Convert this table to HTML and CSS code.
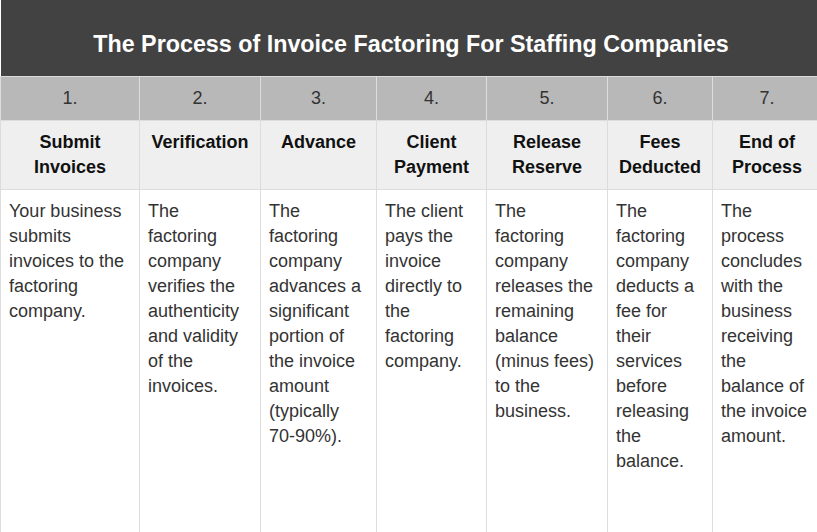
FILE: index.html
```html
<!DOCTYPE html>
<html>
<head>
<meta charset="utf-8">
<link rel="stylesheet" href="styles.css">
</head>
<body>
<div class="wrap">
<table class="process">
  <colgroup>
    <col class="c1"><col class="c2"><col class="c3"><col class="c4"><col class="c5"><col class="c6"><col class="c7">
  </colgroup>
  <thead>
    <tr><th class="title" colspan="7">The Process of Invoice Factoring For Staffing Companies</th></tr>
    <tr class="nums">
      <td>1.</td><td>2.</td><td>3.</td><td>4.</td><td>5.</td><td>6.</td><td>7.</td>
    </tr>
    <tr class="heads">
      <th>Submit Invoices</th><th>Verification</th><th>Advance</th><th>Client Payment</th><th>Release Reserve</th><th>Fees Deducted</th><th>End of Process</th>
    </tr>
  </thead>
  <tbody>
    <tr class="body">
      <td>Your business submits invoices to the factoring company.</td>
      <td>The factoring company verifies the authenticity and validity of the invoices.</td>
      <td>The factoring company advances a significant portion of the invoice amount (typically 70-90%).</td>
      <td>The client pays the invoice directly to the factoring company.</td>
      <td>The factoring company releases the remaining balance (minus fees) to the business.</td>
      <td>The factoring company deducts a fee for their services before releasing the balance.</td>
      <td>The process concludes with the business receiving the balance of the invoice amount.</td>
    </tr>
  </tbody>
</table>
</div>
</body>
</html>
```
FILE: styles.css
```css
html, body {
  margin: 0;
  padding: 0;
  overflow: hidden;
  background: #fff;
}
.wrap {
  width: 830px;
}
.process {
  border-collapse: collapse;
  table-layout: fixed;
  width: 821px;
  font-family: "Liberation Sans", Arial, sans-serif;
  font-size: 18px;
  line-height: 25px;
  color: #333;
}
.c1 { width: 139px; }
.c2 { width: 121px; }
.c3 { width: 116px; }
.c4 { width: 110px; }
.c5 { width: 121px; }
.c6 { width: 105px; }
.c7 { width: 109px; }
.process td, .process th {
  border: 1px solid #dcdcdc;
  padding: 9px 8px;
  vertical-align: top;
}
.process th.title {
  background: #424242;
  color: #fff;
  font-size: 23.3px;
  font-weight: bold;
  line-height: 28px;
  padding: 30px 8px 18px;
  text-align: center;
  border: none;
  border-bottom: 1px solid #dcdcdc;
}
.nums td {
  background: #b8b8b8;
  text-align: center;
  vertical-align: middle;
  height: 25px;
}
.heads th {
  background: #efefef;
  color: #111;
  font-weight: bold;
  text-align: center;
}
.body td {
  height: 360px;
  color: #333;
}
```
